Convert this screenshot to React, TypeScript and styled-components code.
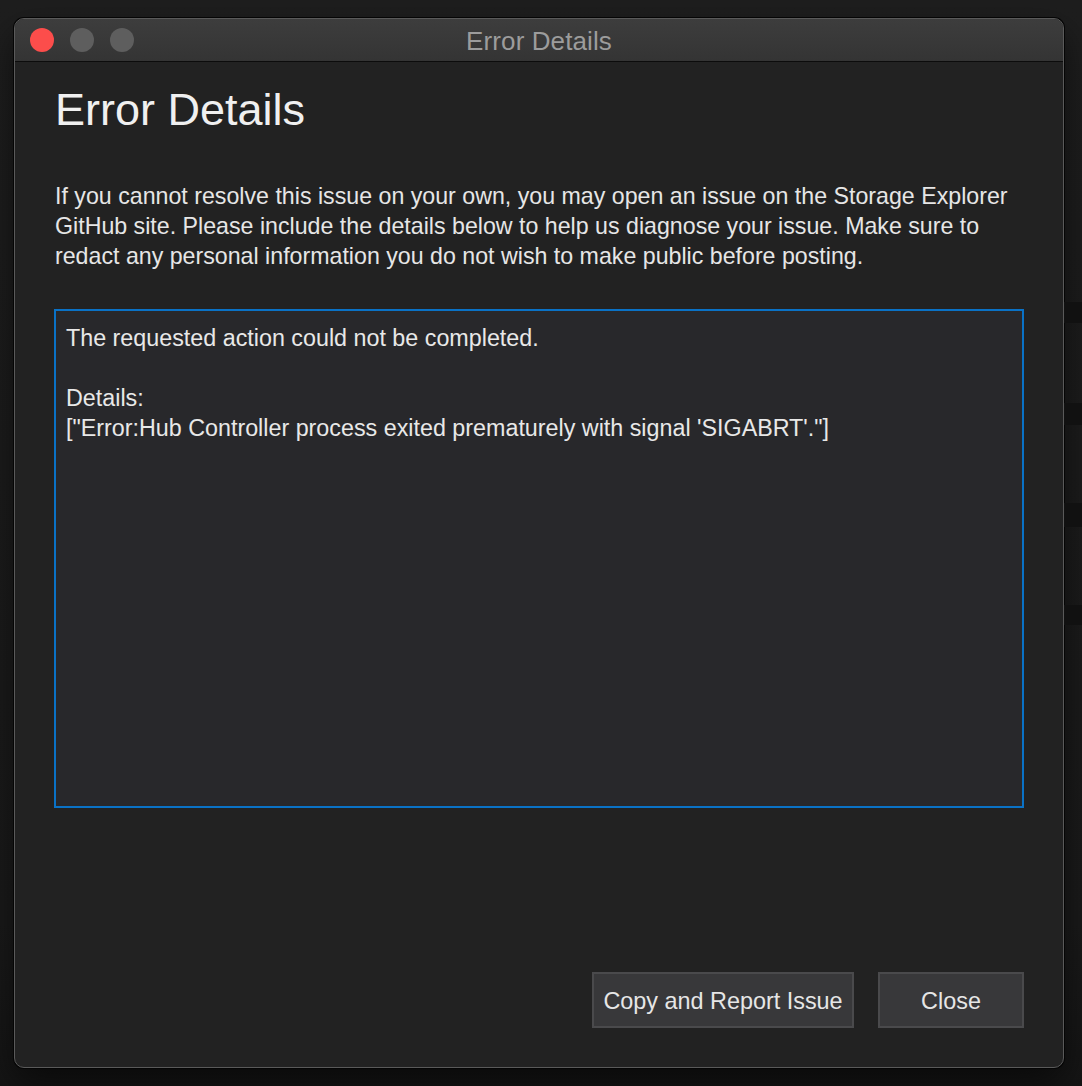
import React from "react";
import styled, { createGlobalStyle } from "styled-components";

const GlobalStyle = createGlobalStyle`
  html, body {
    margin: 0;
    padding: 0;
    background: #1b1b1b;
  }
  body {
    font-family: "Liberation Sans", Arial, Helvetica, sans-serif;
    -webkit-font-smoothing: antialiased;
  }
`;

const Desktop = styled.div`
  display: grid;
  grid-template-columns: 14px 1050px 1fr;
  height: 1086px;
  overflow: hidden;
  background: linear-gradient(#1e1e1e, #1a1a1a 85%, #151515);
`;

const BackdropStrip = styled.div`
  grid-column: 3;
  display: flex;
  flex-direction: column;
  padding-top: 302px;
`;

const BackdropRow = styled.div<{ $band: number; $gap: number }>`
  height: ${(p) => p.$band}px;
  margin-bottom: ${(p) => p.$gap}px;
  background: #111111;
`;

const Window = styled.div`
  grid-column: 2;
  margin-top: 18px;
  height: 1050px;
  box-sizing: border-box;
  display: flex;
  flex-direction: column;
  background: #222222;
  border: 1px solid #5a5a5a;
  border-radius: 10px;
  overflow: hidden;
  box-shadow: 0 0 0 1px #050505, 0 16px 36px rgba(0, 0, 0, 0.55);
`;

const TitleBar = styled.div`
  display: grid;
  grid-template-columns: 1fr auto 1fr;
  align-items: center;
  height: 42px;
  padding: 0 15px;
  background: linear-gradient(#3d3d3d, #343434);
  border-bottom: 1px solid #0c0c0c;
`;

const Lights = styled.div`
  display: flex;
  gap: 16px;
`;

const Light = styled.span<{ $color: string }>`
  width: 24px;
  height: 24px;
  border-radius: 50%;
  background: ${(p) => p.$color};
`;

const WindowTitle = styled.div`
  padding-top: 2px;
  font-size: 26px;
  color: #9c9c9c;
  letter-spacing: 0.1px;
`;

const Body = styled.div`
  flex: 1;
  display: flex;
  flex-direction: column;
  padding: 22px 39px 39px 39px;
`;

const Heading = styled.h1`
  margin: 0 0 0 1px;
  font-size: 45px;
  line-height: 52px;
  font-weight: 400;
  color: #f0f0f0;
`;

const Intro = styled.p`
  margin: 45px 0 0 1px;
  font-size: 23.2px;
  line-height: 30px;
  color: #e6e6e6;
  white-space: nowrap;
`;

const DetailsBox = styled.div`
  margin-top: 38px;
  height: 499px;
  box-sizing: border-box;
  padding: 12px 10px 10px;
  border: 2px solid #0a72c6;
  background: #28282b;
  color: #e8e8e8;
  font-size: 23.3px;
  line-height: 30px;
  white-space: pre-wrap;
`;

const Footer = styled.div`
  margin-top: auto;
  display: flex;
  justify-content: flex-end;
  gap: 24px;
`;

const Button = styled.button<{ $width: number }>`
  width: ${(p) => p.$width}px;
  height: 56px;
  box-sizing: border-box;
  padding: 3px 0 0;
  border: 2px solid #4a4a4c;
  background: #38383a;
  color: #e6e6e6;
  font-family: inherit;
  font-size: 23.4px;
  cursor: pointer;
`;

const details = `The requested action could not be completed.

Details:
["Error:Hub Controller process exited prematurely with signal 'SIGABRT'."]`;

export default function App() {
  return (
    <>
      <GlobalStyle />
      <Desktop>
        <Window>
          <TitleBar>
            <Lights>
              <Light $color="#fc4d4b" />
              <Light $color="#5e5e5e" />
              <Light $color="#5e5e5e" />
            </Lights>
            <WindowTitle>Error Details</WindowTitle>
            <span />
          </TitleBar>
          <Body>
            <Heading>Error Details</Heading>
            <Intro>
              If you cannot resolve this issue on your own, you may open an issue on the Storage Explorer
              <br />
              GitHub site. Please include the details below to help us diagnose your issue. Make sure to
              <br />
              redact any personal information you do not wish to make public before posting.
            </Intro>
            <DetailsBox>{details}</DetailsBox>
            <Footer>
              <Button $width={262}>Copy and Report Issue</Button>
              <Button $width={146}>Close</Button>
            </Footer>
          </Body>
        </Window>
        <BackdropStrip>
          <BackdropRow $band={21} $gap={80} />
          <BackdropRow $band={22} $gap={78} />
          <BackdropRow $band={24} $gap={78} />
          <BackdropRow $band={20} $gap={0} />
        </BackdropStrip>
      </Desktop>
    </>
  );
}
